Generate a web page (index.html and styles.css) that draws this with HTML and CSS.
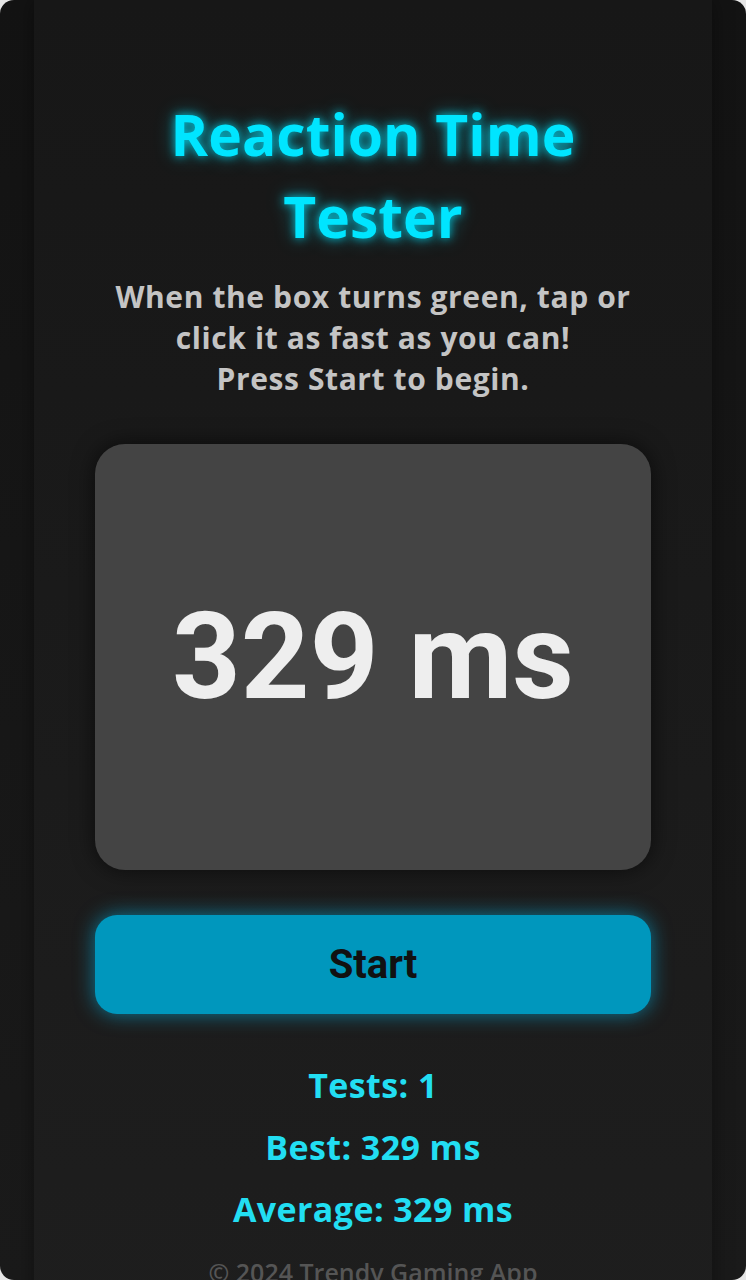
FILE: index.html
```html
<!DOCTYPE html>
<html lang="en">
<head>
	<meta charset="UTF-8">
	<meta name="viewport" content="width=device-width, initial-scale=1.0">
	<title>Reaction Time Tester</title>
	<link rel="stylesheet" href="styles.css">
</head>
<body>

	<div class="screen">
		<div class="container">
			<h1>Reaction Time Tester</h1>
			<p class="intro">When the box turns green, tap or<br>click it as fast as you can!<br>Press Start to begin.</p>

			<div class="game-box" id="gameBox">329 ms</div>

			<button type="button" id="startBtn">Start</button>

			<div class="stats">
				<p>Tests: <span id="tests">1</span></p>
				<p>Best: <span id="best">329 ms</span></p>
				<p>Average: <span id="average">329 ms</span></p>
			</div>

			<footer>&copy; 2024 Trendy Gaming App</footer>
		</div>
	</div>

</body>
</html>
```

FILE: styles.css
```css
html {
	background-color: #e6e6e6;
}

body {
	margin: 0;
	font-family: "Open Sans", "Noto Sans", sans-serif;
}

.screen {
	height: 1280px;
	overflow: hidden;
	border-radius: 14px;
	background: linear-gradient(#131313, #1a1a1a);
}

.container {
	width: 556px;
	min-height: 1280px;
	margin: 0 auto;
	padding: 93px 61px 0;
	background: linear-gradient(#171717, #1e1e1e);
	box-shadow: 0 0 20px rgba(0, 0, 0, 0.4);
	text-align: center;
}

h1 {
	margin: 0;
	font-size: 57px;
	line-height: 82px;
	font-weight: 700;
	color: #00e5ff;
	text-shadow: 0 0 10px rgba(0, 229, 255, 0.8), 0 0 20px rgba(0, 229, 255, 0.4);
}

.intro {
	margin: 19px 0 0;
	font-size: 30px;
	line-height: 41px;
	letter-spacing: 0.6px;
	font-weight: 700;
	color: #c4c4c4;
}

.game-box {
	margin-top: 45px;
	height: 426px;
	border-radius: 30px;
	background-color: #444;
	box-shadow: 0 0 22px rgba(0, 0, 0, 0.6);
	display: flex;
	justify-content: center;
	align-items: center;
	font-family: Roboto, sans-serif;
	font-size: 120px;
	font-weight: 700;
	color: #eee;
}

button {
	margin-top: 45px;
	width: 100%;
	height: 99px;
	border: none;
	border-radius: 22px;
	background-color: #0097bd;
	box-shadow: 0 0 20px rgba(0, 200, 255, 0.55);
	font-family: Roboto, sans-serif;
	font-size: 40px;
	font-weight: 700;
	color: #111;
	cursor: pointer;
}

.stats {
	margin-top: 51px;
}

.stats p {
	margin: 0 0 22px;
	font-size: 34px;
	line-height: 40px;
	letter-spacing: 0.4px;
	font-weight: 700;
	color: #22def2;
}

footer {
	margin-top: 26px;
	font-size: 25px;
	font-weight: 600;
	color: #555;
}
```
